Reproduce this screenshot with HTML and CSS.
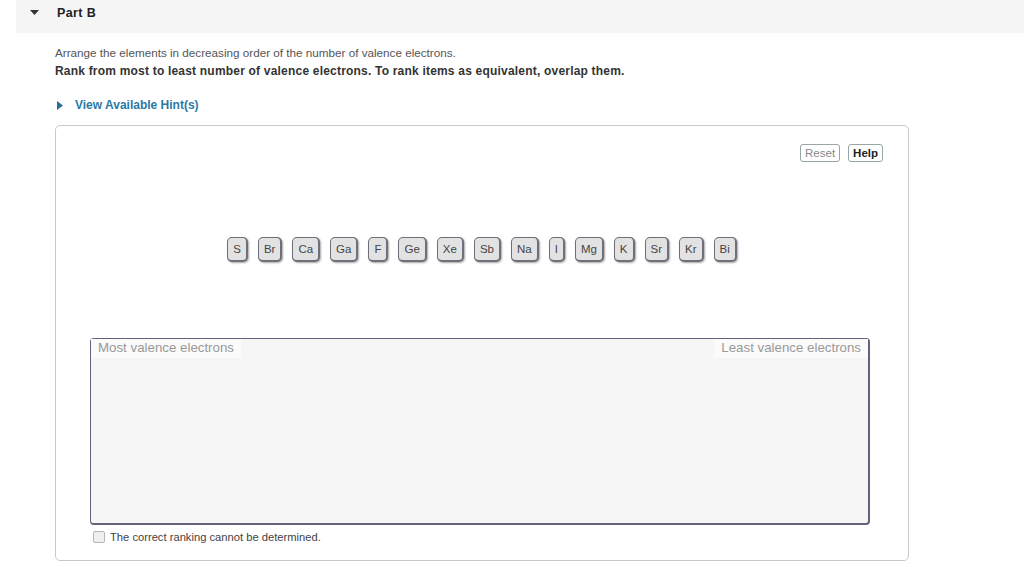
FILE: index.html
```html
<!DOCTYPE html>
<html lang="en">

<head>
    <meta charset="UTF-8">
    <title>Part B</title>
    <link rel="stylesheet" href="styles.css">
</head>

<body>

    <div class="part-header">
        <svg class="caret-down" width="9" height="5" viewBox="0 0 9 5"><path d="M0 0 H9 L4.5 5 Z" fill="#333"/></svg>
        <span class="part-title">Part B</span>
    </div>

    <div class="part-body">
        <p class="prompt">Arrange the elements in decreasing order of the number of valence electrons.</p>
        <p class="prompt strong">Rank from most to least number of valence electrons. To rank items as equivalent, overlap them.</p>

        <a class="hint" href="#">
            <svg width="6" height="9" viewBox="0 0 6 9"><path d="M0 0 L6 4.5 L0 9 Z" fill="#2a6f98"/></svg>
            View Available Hint(s)
        </a>

        <div class="box">
            <div class="tools">
                <button class="tool-btn reset">Reset</button>
                <button class="tool-btn help">Help</button>
            </div>

            <div class="chips">
                <span class="chip">S</span>
                <span class="chip">Br</span>
                <span class="chip">Ca</span>
                <span class="chip">Ga</span>
                <span class="chip">F</span>
                <span class="chip">Ge</span>
                <span class="chip">Xe</span>
                <span class="chip">Sb</span>
                <span class="chip">Na</span>
                <span class="chip">I</span>
                <span class="chip">Mg</span>
                <span class="chip">K</span>
                <span class="chip">Sr</span>
                <span class="chip">Kr</span>
                <span class="chip">Bi</span>
            </div>

            <div class="ranking">
                <span class="rank-label">Most valence electrons</span>
                <span class="rank-label">Least valence electrons</span>
            </div>

            <label class="cannot">
                <input type="checkbox" class="check">
                The correct ranking cannot be determined.
            </label>
        </div>
    </div>

</body>

</html>
```

FILE: styles.css
```css
body {
    margin: 0;
    font-family: 'Liberation Sans', Arial, sans-serif;
    background: #fff;
    color: #333;
}

.part-header {
    margin-left: 16px;
    height: 33px;
    background: #f5f5f5;
    display: flex;
    align-items: flex-start;
    padding-left: 14px;
    box-sizing: border-box;
}

.caret-down {
    margin: 10px 18px 0 0;
}

.part-title {
    margin-top: 5px;
    font-size: 12.5px;
    line-height: 16px;
    letter-spacing: 0.4px;
    font-weight: bold;
    color: #222;
}

.part-body {
    padding-left: 55px;
}

.prompt {
    margin: 0;
    font-size: 11.7px;
    line-height: 18px;
    color: #555;
}

.prompt:first-child {
    margin-top: 11px;
}

.prompt.strong {
    font-size: 12px;
    letter-spacing: 0.2px;
    font-weight: bold;
    color: #333;
}

.hint {
    display: flex;
    align-items: center;
    gap: 12px;
    margin: 16px 0 0 2px;
    height: 18px;
    font-size: 12px;
    font-weight: bold;
    color: #2b7aa5;
    text-decoration: none;
}

.box {
    margin-top: 11px;
    width: 854px;
    height: 436px;
    border: 1px solid #c9c9c9;
    border-radius: 5px;
    padding-top: 18px;
    box-sizing: border-box;
}

.tools {
    display: flex;
    justify-content: flex-end;
    gap: 8px;
    padding-right: 25px;
}

.tool-btn {
    height: 18px;
    padding: 0 4px;
    font-family: inherit;
    font-size: 11.5px;
    background: #fff;
    border: 1px solid #9aa5a5;
    border-radius: 3px;
}

.reset {
    color: #888;
}

.help {
    font-weight: bold;
    color: #222;
}

.chips {
    display: flex;
    justify-content: center;
    gap: 10px;
    margin-top: 75px;
}

.chip {
    height: 25px;
    padding: 0 5px;
    display: flex;
    align-items: center;
    font-size: 11.5px;
    color: #444;
    background: #e2e2e2;
    border: 1px solid #6f6f7b;
    border-right-width: 2px;
    border-bottom-width: 2px;
    border-radius: 5px;
    box-shadow: 1px 1px 2px rgba(0, 0, 0, 0.35);
    box-sizing: border-box;
}

.ranking {
    margin: 76px 38px 0 34px;
    height: 187px;
    background: #f6f6f6;
    border: 1px solid #62627a;
    border-right-width: 2px;
    border-bottom-width: 2px;
    border-radius: 4px;
    box-sizing: border-box;
    display: flex;
    justify-content: space-between;
    align-items: flex-start;
}

.rank-label {
    font-size: 13.3px;
    line-height: 16px;
    color: #999;
    background: #fbfbfb;
    padding: 1px 7px 2px;
}

.cannot {
    display: flex;
    align-items: center;
    gap: 5px;
    margin: 6px 0 0 37px;
    font-size: 11.2px;
    color: #444;
}

.check {
    appearance: none;
    margin: 0;
    width: 12px;
    height: 12px;
    border: 1px solid #b5b5b5;
    border-radius: 2px;
    background: #efefef;
}
```
